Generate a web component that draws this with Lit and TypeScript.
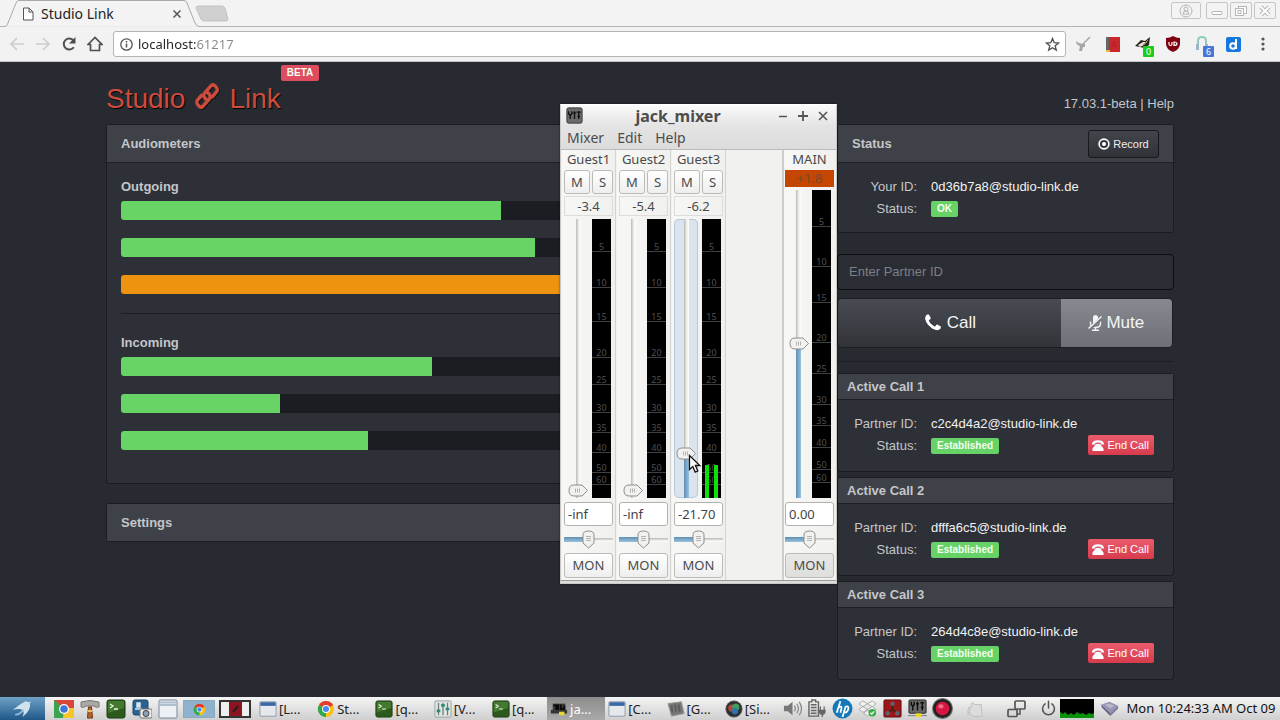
import { LitElement, html, svg, css, nothing } from "lit";
import { customElement, property } from "lit/decorators.js";

const PHONE_PATH =
  "M1600 1240q0 27-10 70.5t-21 68.5q-21 50-122 106-94 51-186 51-27 0-53-3.5t-57.5-12.5-47-14.5-55.5-20.5-49-18q-98-35-175-83-127-79-264-216t-216-264q-48-77-83-175-3-9-18-49t-20.5-55.5-14.5-47-12.5-57.5-3.5-53q0-92 51-186 56-101 106-122 25-11 68.5-21t70.5-10q14 0 21 3 18 6 53 76 11 19 30 54t35 63.5 31 53.5q3 4 17.5 25t21.5 35.5 7 28.5q0 20-28.5 50t-62 55-62 53-28.5 46q0 9 5 22.5t8.5 20.5 14 24 11.5 19q76 137 174 235t235 174q2 1 19 11.5t24 14 20.5 8.5 22.5 5q18 0 46-28.5t53-62 55-62 50-28.5q14 0 28.5 7t35.5 21.5 25 17.5q25 15 53.5 31t63.5 35 54 30q70 35 76 53 3 7 3 21z";

const chromeLogo = svg`
  <circle cx="10" cy="10" r="9" fill="#fbc116"/>
  <path d="M10 10 2.2 5.5A9 9 0 0 1 17.8 5.5z" fill="#e33b2e"/>
  <path d="M10 10 2.2 5.5A9 9 0 0 0 10 19z" fill="#2da94f"/>
  <path d="M10 5.5h7.8L10 10z" fill="#e33b2e"/>
  <circle cx="10" cy="10" r="4.4" fill="#fff"/><circle cx="10" cy="10" r="3.4" fill="#4a8af4"/>`;
const terminalLogo = svg`
  <rect x="1" y="1" width="18" height="18" rx="2" fill="#2c5a1c" stroke="#1d3a12"/>
  <path d="M2 2h16v7L2 14z" fill="#447a30"/>
  <path d="m4 5 3 2-3 2M8 10h4" stroke="#e8f3e2" stroke-width="1.3" fill="none"/>`;
const windowLogo = svg`
  <rect x="1" y="2" width="18" height="16" rx="1" fill="#e6e9ec" stroke="#8795a5"/>
  <rect x="1.5" y="2.5" width="17" height="4" fill="#3a68a6"/>`;
const mixerLogo = svg`
  <rect x="1" y="1" width="18" height="18" rx="2" fill="#6b6b6b" stroke="#333"/>
  <path d="M3 5v3l2 2 2-2V5M5 10v4M10 5v9M8.500 7h3M15 5v9M13.500 11h3M12.500 6h5" stroke="#111" stroke-width="1.600" fill="none"/>`;

const ICONS: Record<string, unknown> = {
  chrome: chromeLogo,
  chromebox: svg`<rect x="0" y="1" width="20" height="18" fill="#d9463a"/><path d="M0 1v18h10V9z" fill="#3ea351"/><path d="M10 9h10v10H9z" fill="#f5c828"/><circle cx="10" cy="10" r="5" fill="#fff"/><circle cx="10" cy="10" r="3.800" fill="#3f76d6"/>`,
  terminal: terminalLogo,
  window: windowLogo,
  mixer: mixerLogo,
  bird: svg`<path d="M1 11c3-2 6-5 12-8l3 1 2-1-1 2c1 5-2 9-7 13 2-4 1-6-1-7-3-1-5 0-8 0z" fill="#cfe2ee"/><path d="M3 16c3 0 6-2 8-5" stroke="#9cc3dc" stroke-width="1.5" fill="none"/>`,
  hammer: svg`<path d="M1 3q9-3 18 0v5q-3 1-5-1H6Q4 9 1 8z" fill="#a9a9a6" stroke="#777"/><path d="M8.500 8h3l1 11h-5z" fill="#b5652a" stroke="#70330e"/><path d="M8 12h4" stroke="#e6c25a" stroke-width="2"/>`,
  shot: svg`<rect x="1" y="1" width="15" height="15" rx="2" fill="#2c6291" stroke="#1c4468"/><path d="M5 4h3v4H5zM3 10h7" stroke="#d5e6f2" stroke-width="1.500" fill="#d5e6f2"/><rect x="8" y="10" width="12" height="9" rx="1" fill="#e8e8e8" stroke="#777"/><circle cx="14" cy="14.500" r="3" fill="#89a0b8" stroke="#444"/>`,
  files: svg`<rect x="1" y="1" width="18" height="18" rx="1" fill="#edf1f5" stroke="#77889b"/><path d="M1.500 3.500h17M1.500 6h17" stroke="#aebfce" stroke-width="2"/>`,
  volume: svg`<path d="M1 7h4l5-4v14l-5-4H1z" fill="#777"/><path d="M12 7q2 3 0 6M14.500 5q3.500 5 0 10M17 3q5 7 0 14" stroke="#888" stroke-width="1.300" fill="none"/>`,
  battery: svg`<path d="M4 1h4v2h3v15H1V3h3z" fill="none" stroke="#666" stroke-width="1.500"/><path d="M3 6h6M3 9h6M3 12h6M3 15h6" stroke="#666" stroke-width="1.600"/><path d="M13 8v4M17 8v4M12 12h6q0 4-3 4t-3-4zM15 15v4" fill="#666" stroke="#666" stroke-width="1.300"/>`,
  hp: svg`<circle cx="10" cy="10" r="9.500" fill="#1479b8"/><path d="M8 3 4.500 14M6.500 9q3-2 2.500 1l-1 4M13 8l-3 10M12.500 8.500q4-1.500 3 2-1 4-4 3" stroke="#fff" stroke-width="1.700" fill="none"/>`,
  dropbox: svg`<path d="m5 2 5 3-5 3-4-3zM15 2l4 3-4 3-5-3zM5 8l5 3-5 3-4-3zM15 8l4 3-4 3-5-3zM6 15l4-3 4 3-4 3z" fill="#f3f3f3" stroke="#999" stroke-width=".8"/><circle cx="15" cy="14.500" r="4" fill="#37ad45"/><path d="m13 14.500 1.500 1.500 2.500-3" stroke="#fff" stroke-width="1.300" fill="none"/>`,
  redtray: svg`<rect x="1" y="1" width="18" height="18" rx="1" fill="#9c1519" stroke="#6d0c10"/><path d="M10 11V6M10 11l-5 4M10 11l5 4" stroke="#321" stroke-width="1.500"/><circle cx="10" cy="5" r="2.300" fill="#5a6472"/><circle cx="5" cy="15" r="2.300" fill="#5a6472"/><circle cx="15" cy="15" r="2.300" fill="#5a6472"/>`,
  mixtray: svg`<rect x="1" y="1" width="18" height="14" rx="1" fill="#6b6b6b" stroke="#222"/><path d="M3.500 3v3l1.500 1.500L6.500 6V3M5 7v5M10 3v9M8.500 5h3M15 3v9M13.500 9h3M13 4h4" stroke="#0c0c0c" stroke-width="1.500" fill="none"/><path d="M0 17.500h20" stroke="#777"/><path d="M8 15h6v4H8z" fill="#e9da28"/>`,
  record: svg`<circle cx="10" cy="10" r="9.500" fill="#222" stroke="#777"/><circle cx="10" cy="10" r="6.500" fill="#d5163e"/><ellipse cx="8.500" cy="8" rx="2.500" ry="2" fill="#ef6d88"/>`,
  hand: svg`<path d="M6 8V4l2-1 1 2h8l1 13H7l-1-2H2v-2h3l-3-1v-2h3l-2-1V8z" fill="#dcdcdc" stroke="#bdbdbd"/>`,
  network: svg`<rect x="8" y="2" width="10" height="8" rx="1" fill="none" stroke="#555" stroke-width="1.700"/><rect x="1" y="10.500" width="9" height="7" rx="1" fill="#d8d8d8" stroke="#555" stroke-width="1.700"/><path d="M13 10v5h-3" fill="none" stroke="#555" stroke-width="1.500"/>`,
  power: svg`<path d="M6 4.500a7 7 0 1 0 8 0M10 1.500v8" stroke="#555" stroke-width="1.800" fill="none" stroke-linecap="round"/>`,
  cube: svg`<path d="m1 6 9-3 9 4-8 8z" fill="#9795b3"/><path d="m1 6 10 9v3L2 9z" fill="#5e5b7e"/><path d="m19 7-8 8v3l8-8z" fill="#76739a"/><path d="m5 6 5-1 5 2-4 3z" fill="#b9b7ce"/>`,
  sliders: svg`<rect x="1" y="1" width="18" height="18" rx="1" fill="#dfe5e3" stroke="#90a09c"/><path d="M5 3v14M10 3v14M15 3v14" stroke="#6b7b80" stroke-width="1.400"/><path d="M3 12h4M8 6h4M13 10h4" stroke="#2e8a6d" stroke-width="3"/>`,
  keys: svg`<path d="m1 4 15-2 3 13-14 3z" fill="#777" stroke="#999"/><path d="m5 6 1 8M9 5l1 8M13 5l1 8" stroke="#5a5a5a" stroke-width="2"/>`,
  scope: svg`<circle cx="10" cy="10" r="9" fill="#2b2f30" stroke="#555"/><circle cx="7.500" cy="9" r="4" fill="#b8433a"/><circle cx="12" cy="8" r="4" fill="#3d9d5e"/><circle cx="11" cy="12.500" r="3.500" fill="#2e74a8"/>`,
  jack: svg`<path d="M1 11h18v4H1z" fill="#333"/><path d="M3 4h14v8H3z" fill="#3a3a3a"/><path d="M4 6h3v5M9 5v6M12 5v5h4V6" stroke="#0a0a0a" stroke-width="2" fill="none"/><path d="M10 13h6v4h-6z" fill="#e8d52c"/>`,
};

const icon = (name: string, size = 20, h = size) =>
  html`<svg width=${size} height=${h} viewBox="0 0 20 20" aria-hidden="true">${ICONS[name]}</svg>`;

/* One level meter: tick positions are percentages of the full scale. */
const TICKS: [string, number][] = [
  ["5", 12], ["10", 25], ["15", 37], ["20", 50], ["25", 60],
  ["30", 70], ["35", 77], ["40", 84], ["50", 91], ["60", 95],
];

@customElement("mixer-strip")
export class MixerStrip extends LitElement {
  @property() name = "";
  @property() level = "";
  @property() gain = "";
  @property({ type: Number }) fader = 0;
  @property({ type: Number }) signal = 0;
  @property({ type: Boolean, reflect: true }) active = false;
  @property({ type: Boolean, reflect: true }) main = false;

  static styles = css`
    :host {
      display: flex; flex-direction: column; gap: 2px; box-sizing: border-box;
      width: 54px; padding: 1px 2px 2px; border-right: 1px solid #d4d3d0;
      background: linear-gradient(90deg, #f7f7f5, #f0f0ee);
      font: 13px/17px "Noto Sans", sans-serif; color: #4a4a4a;
    }
    :host([main]) { border-right: 0; border-left: 2px solid #cfcecb; padding-left: 1px; }
    .name { text-align: center; height: 17px; font-size: 13px; }
    .switches { display: flex; gap: 2px; height: 24px; }
    button {
      box-sizing: border-box; padding: 0; flex: 1; font: inherit; color: inherit;
      border: 1px solid #bdbbb7; border-radius: 3px; background: linear-gradient(#fff, #eee);
    }
    .mute { flex: 0 0 26px; }
    .level { height: 20px; line-height: 18px; text-align: center; box-sizing: border-box; border: 1px solid #dddcd9; }
    :host([main]) .level { height: 17px; line-height: 17px; background: #c54503; color: #7a4a30; border: 0; }
    .fader { flex: 1; min-height: 0; display: flex; justify-content: space-between; padding: 1px 2px 2px 0; }
    :host([main]) .fader { padding-right: 3px; }
    .slot { flex: 1; display: flex; justify-content: center; }
    :host([active]) .slot { background: #dbe4ee; border-radius: 5px; box-shadow: inset 0 0 0 1px #b5c9db; margin-right: 4px; }
    .meter { width: 19px; background: #000; display: flex; flex-direction: column; position: relative; }
    .tick {
      min-height: 0; display: flex; flex-direction: column; justify-content: flex-end; align-items: center;
      box-sizing: border-box; border-bottom: 1px solid #414141; font: 9px/8px "Noto Sans", sans-serif; color: #505050;
    }
    .rest { flex-basis: 0; }
    .bars { position: absolute; inset: auto 3px 0 3px; display: flex; justify-content: space-between; }
    .bar { width: 4px; background: #0be00b; }
    input { box-sizing: border-box; margin: 0; }
    .gain {
      width: 100%; height: 24px; padding: 0 3px; border: 1px solid #b4b2ae; border-radius: 3px;
      background: #fff; font: inherit; color: #444;
    }
    input[type="range"] { appearance: none; -webkit-appearance: none; background: none; padding: 0; outline: 0; }
    .vertical { writing-mode: vertical-lr; direction: rtl; width: 20px; height: 100%; }
    .vertical::-webkit-slider-runnable-track {
      width: 20px; height: 100%;
      background:
        linear-gradient(90deg, #5d8fb4, #9cc1dc) center bottom / 5px var(--fill) no-repeat,
        linear-gradient(90deg, #c4c3c0 1px, #e8e8e5 2px, #fff) center / 5px 100% no-repeat;
    }
    .vertical::-webkit-slider-thumb {
      -webkit-appearance: none; width: 20px; height: 14px; border: 0;
      background: url("data:image/svg+xml,%3Csvg xmlns='http://www.w3.org/2000/svg' width='20' height='13'%3E%3Cpath d='M6 1h8l5.500 5.500L14 12H6Q1 12 1 6.500T6 1z' fill='%23f1f1ef' stroke='%23908e8a'/%3E%3Cpath d='M7.500 4.500v4M9.500 4.500v4M11.500 4.500v4' stroke='%23b5b3b0'/%3E%3C/svg%3E") center top no-repeat;
    }
    .pan { width: 100%; height: 23px; }
    .pan::-webkit-slider-runnable-track {
      height: 19px;
      background:
        linear-gradient(#5d8fb4, #9cc1dc) left center / 50% 5px no-repeat,
        linear-gradient(#c4c3c0 1px, #e8e8e5 2px, #fff) center / 100% 4px no-repeat;
    }
    .pan::-webkit-slider-thumb {
      -webkit-appearance: none; width: 13px; height: 19px; border: 0;
      background: url("data:image/svg+xml,%3Csvg xmlns='http://www.w3.org/2000/svg' width='13' height='19'%3E%3Cpath d='M1 5Q1 1 6.500 1T12 5v8l-5.500 5L1 13z' fill='%23f1f1ef' stroke='%23908e8a'/%3E%3Cpath d='M4 6.500h5M4 8.500h5M4 10.500h5' stroke='%23b5b3b0'/%3E%3C/svg%3E") center no-repeat;
    }
    .mon { flex: 0 0 25px; }
    :host([main]) .mon { background: linear-gradient(#e8e8e6, #dededc); }
  `;

  render() {
    let prev = 0;
    return html`
      <div class="name">${this.name}</div>
      ${this.main ? nothing : html`<div class="switches">
        <button class="mute" aria-label="Mute ${this.name}">M</button><button aria-label="Solo ${this.name}">S</button>
      </div>`}
      <div class="level">${this.level}</div>
      <div class="fader">
        <div class="slot">
          <input class="vertical" type="range" min="0" max="100" .value=${String(this.fader)}
            style="--fill:${this.fader}%" aria-label="${this.name} fader" />
        </div>
        <div class="meter">
          ${TICKS.map(([label, at]) => {
            const grow = at - prev;
            prev = at;
            return html`<div class="tick" style="flex:${grow} 1 0">${label}</div>`;
          })}
          <div class="rest" style="flex-grow:${100 - prev}"></div>
          ${this.signal ? html`<div class="bars" style="height:${this.signal}%"><span class="bar"></span><span class="bar"></span></div>` : nothing}
        </div>
      </div>
      <input class="gain" type="text" .value=${this.gain} aria-label="${this.name} gain" />
      <input class="pan" type="range" min="0" max="100" value="50" aria-label="${this.name} balance" />
      <button class="mon" aria-label="Monitor ${this.name}">MON</button>`;
  }
}

@customElement("mixer-window")
export class MixerWindow extends LitElement {
  static styles = css`
    :host {
      display: flex; flex-direction: column; box-sizing: border-box; border: 1px solid #c9c8c5; border-top-color: #fff;
      background: #f1f1ee; font: 14px/20px "Noto Sans", sans-serif; color: #4c4c4c; box-shadow: 0 0 2px #0008;
    }
    .title { display: flex; align-items: center; height: 21px; padding: 0 5px; background: linear-gradient(#fafafa, #e4e4e4); }
    .title b { flex: 1; text-align: center; font-size: 16px; padding-left: 2px; }
    .title button, .menu button { border: 0; padding: 0; background: none; color: inherit; font: inherit; }
    .title button { width: 16px; height: 16px; margin-left: 4px; display: grid; place-items: center; }
    .menu { display: flex; gap: 13px; height: 24px; padding: 0 6px; background: linear-gradient(#e4e4e4, #dcdcdc); border-bottom: 1px solid #bbb; box-sizing: border-box; }
    .strips { flex: 1; min-height: 0; display: flex; gap: 1px; padding-left: 1px; }
    .space { flex: 1; }
    .foot { height: 3px; border-top: 1px solid #999; background: #ddd; box-sizing: border-box; }
    .pointer { position: absolute; left: 127px; top: 349px; }
  `;
  render() {
    return html`
      <div class="title">
        ${icon("mixer", 17)}<b>jack_mixer</b>
        <button aria-label="Minimize"><svg width="12" height="12"><path d="M2 6.500h8" stroke="#555" stroke-width="1.500" /></svg></button>
        <button aria-label="Maximize"><svg width="12" height="12"><path d="M1 6h10M6 1v10" stroke="#555" stroke-width="1.800" /></svg></button>
        <button aria-label="Close"><svg width="12" height="12"><path d="m2 2 8 8M10 2l-8 8" stroke="#555" stroke-width="1.600" /></svg></button>
      </div>
      <div class="menu"><button>Mixer</button><button>Edit</button><button>Help</button></div>
      <div class="strips">
        <mixer-strip name="Guest1" level="-3.4" gain="-inf"></mixer-strip>
        <mixer-strip name="Guest2" level="-5.4" gain="-inf"></mixer-strip>
        <mixer-strip name="Guest3" level="-6.2" gain="-21.70" fader="14" signal="12" active></mixer-strip>
        <div class="space"></div>
        <mixer-strip name="MAIN" level="+1.8" gain="0.00" fader="50" main></mixer-strip>
      </div>
      <div class="foot"></div>
      <svg class="pointer" width="14" height="20" viewBox="0 0 14 20" aria-hidden="true">
        <path d="M1.500 1.500v14l3.300-3 2.400 5.600 2.600-1.100-2.400-5.500h4.400z" fill="#fff" stroke="#111" stroke-width="1.300" />
      </svg>`;
  }
}

const CALLS = ["c2c4d4a2", "dfffa6c5", "264d4c8e"];
const TASKS: [string, string, boolean?][] = [
  ["window", "[L..."], ["chrome", "St..."], ["terminal", "[q..."], ["sliders", "[V..."], ["terminal", "[q..."],
  ["jack", "ja...", true], ["window", "[C..."], ["keys", "[G..."], ["scope", "[Si..."],
];

@customElement("app-root")
export class AppRoot extends LitElement {
  static styles = css`
    :host {
      display: flex; flex-direction: column; height: 100vh; min-height: 720px; position: relative; overflow: hidden;
      background: #272a30; color: #c4c6c9; font: 13px/22px "Liberation Sans", Arial, sans-serif;
    }
    button { font: inherit; color: inherit; border: 0; padding: 0; background: none; box-sizing: border-box; }
    svg { display: block; flex: none; }

    .tabs { display: flex; height: 27px; background: #f3f3f3; border-bottom: 1px solid #b3b3b3; box-sizing: border-box; font: 14px/27px "Noto Sans", sans-serif; color: #222; }
    .tab { position: relative; box-sizing: border-box; width: 194px; height: 27px; margin-left: 5px; padding: 0 17px; display: flex; align-items: center; gap: 7px; }
    .tab .shape { position: absolute; inset: 0; }
    .tab > :not(.shape) { position: relative; }
    .tab .label { flex: 1; }
    .newtab { align-self: center; margin-left: -4px; }
    .controls { margin-left: auto; display: flex; gap: 2px; padding: 2px 4px; }
    .controls button { width: 22px; height: 17px; border: 1px solid #c6c6c6; border-radius: 2px; display: grid; place-items: center; }
    .controls .user { width: 30px; margin-right: 3px; }

    .toolbar { display: flex; align-items: center; height: 35px; padding: 0 2px 0 4px; background: #f2f2f2; border-bottom: 1px solid #c4c4c4; box-sizing: border-box; }
    .toolbar > button { width: 26px; height: 26px; display: grid; place-items: center; }
    .omni { flex: 1; display: flex; align-items: center; gap: 5px; height: 26px; margin: 0 2px 0 5px; padding: 0 5px 0 6px; background: #fff; border: 1px solid #b4b4b4; border-radius: 3px; box-sizing: border-box; }
    .omni input {
      flex: 1; min-width: 0; border: 0; padding: 0; outline: 0; font: 13px/20px "Noto Sans", sans-serif;
      background: linear-gradient(90deg, #222 58px, #888 58px) text; color: transparent;
    }
    .toolbar > .ext { width: 30px; position: relative; }
    .count { position: absolute; right: 4px; bottom: 0; width: 11px; height: 11px; border-radius: 1px; color: #fff; font: 9px/11px "Noto Sans", sans-serif; }
    .green { background: #19cd19; } .blue { background: #4676d8; }

    .page { flex: 1; min-height: 0; }
    .container { max-width: 1068px; margin: 0 auto; }
    .top { display: flex; align-items: flex-start; height: 62px; }
    h1 { margin: 19px 0 0; display: flex; align-items: center; gap: 9px; font: 28px/36px "Liberation Sans", Arial, sans-serif; color: #cd4c3d; text-shadow: 1px 1px 1px #000; }
    h1 svg { margin-top: -6px; }
    .badge { display: inline-block; padding: 0 6px; border-radius: 2px; background: #67d265; color: #f2fff2; font: bold 10px/16px "Liberation Sans", Arial, sans-serif; }
    .beta { margin-top: 3px; background: #e04c5f; }
    .version { margin-left: auto; margin-top: 31px; }
    a { color: inherit; text-decoration: none; }
    .columns { display: grid; grid-template-columns: 1fr 337px; gap: 30px; align-items: start; }
    .card { background: #2e3037; border: 1px solid #1a1c20; border-radius: 3px; }
    .card h2 { margin: 0; height: 37px; padding: 0 14px; display: flex; align-items: center; justify-content: space-between; background: #3e4148; border-bottom: 1px solid #1e2025; font-size: 13px; line-height: 22px; }
    .closed h2 { border-bottom: 0; }
    .meters { padding: 15px 14px; }
    h3 { margin: 0 0 5px; font-size: 13px; line-height: 18px; }
    .track { height: 19px; margin-bottom: 18px; background: #1c1d22; border-radius: 3px; overflow: hidden; }
    .value { height: 100%; background: #69d466; }
    .warn { background: #ee930f; }
    hr { border: 0; border-top: 1px solid #1d1f24; margin: 19px 0 20px; }
    .closed { margin-top: 19px; }

    .record { display: flex; align-items: center; justify-content: center; gap: 3px; width: 71px; height: 28px; border: 1px solid #17191c; border-radius: 3px; background: linear-gradient(#42454c, #303238); font: 11px/20px "Liberation Sans", Arial, sans-serif; color: #eee; }
    dl { margin: 0; padding: 13px 0 12px; display: grid; grid-template-columns: 79px 1fr auto; column-gap: 14px; }
    dt { text-align: right; grid-column: 1; } dd { margin: 0; color: #f2f2f2; display: flex; align-items: center; height: 22px; }
    .id { grid-column: 2 / -1; white-space: nowrap; }
    .partner { display: block; width: 100%; height: 36px; margin: 21px 0 8px; padding: 0 11px 1px; box-sizing: border-box; background: #2b2d34; border: 1px solid #0c0d0f; border-radius: 4px; font: inherit; color: #eee; }
    .partner::placeholder { color: #7c7f84; }
    .actions { display: flex; height: 50px; margin-right: 1px; border-radius: 5px; overflow: hidden; border: 1px solid #1c1e22; box-sizing: border-box; font: 17px/24px "Liberation Sans", Arial, sans-serif; color: #f4f4f4; text-shadow: 1px 1px 1px #0006; }
    .actions button { display: flex; align-items: center; justify-content: center; gap: 4px; }
    .call { flex: 2; background: linear-gradient(#484b51, #313339); }
    .mutecall { flex: 1; background: linear-gradient(#868a90, #6d7177); }
    .right hr { margin: 13px 0 11px; }
    .active { margin-bottom: 5px; }
    .active h2 { height: 25px; padding: 0 9px; }
    .active dl { padding-bottom: 14px; }
    .end { display: flex; align-items: center; gap: 3px; height: 20px; padding: 0 5px 0 4px; margin-right: 19px; border-radius: 2px; background: linear-gradient(#ea5c6c, #d73b4c); font: 11px/20px "Liberation Sans", Arial, sans-serif; color: #fff; }

    mixer-window { position: absolute; left: 560px; top: 104px; width: 277px; height: 480px; }

    .taskbar { display: flex; height: 23px; background: linear-gradient(#f4f4f4, #cfcfcf); font: 13px/22px "Noto Sans", sans-serif; color: #222; }
    .taskbar button { display: flex; align-items: center; justify-content: center; }
    .start { width: 45px; background: linear-gradient(#6fa1c6, #1f5888); }
    .launch { width: 26px; }
    .launchers { display: flex; padding-left: 6px; }
    .pager { display: flex; gap: 4px; padding: 3px 5px 3px 2px; }
    .pager button { width: 32px; height: 18px; border: 1px solid #8ab; background: #8db2cd; }
    .pager .other { background: #eee; border: 2px solid #333; }
    .tasks { flex: 1; display: flex; min-width: 0; }
    .tasks button { flex: 1; min-width: 0; gap: 2px; justify-content: flex-start; padding-left: 3px; overflow: hidden; white-space: nowrap; }
    .tasks .current { background: linear-gradient(#8c8c8c, #a9a9a9); color: #fff; }
    .tray { display: flex; }
    .tray button { width: 25px; }
    .tray .w40 { width: 40px; } .tray .w44 { width: 44px; } .tray .w18 { width: 18px; }
    .clock { width: 158px; text-align: center; color: #111; }
  `;

  private meters(values: number[]) {
    return values.map(
      (v) => html`<div class="track" role="meter" aria-valuenow=${v}><div class="value ${v > 75 ? "warn" : ""}" style="width:${v}%"></div></div>`
    );
  }

  render() {
    return html`
      <header class="tabs">
        <div class="tab">
          <svg class="shape" width="194" height="27" viewBox="0 0 194 27" aria-hidden="true">
            <path d="M0 26.500Q2 26 3 23L11 3Q12 .5 14 .5H179Q181 .5 182 3L190 23Q191 26 194 26.500V27H0z" fill="#f3f3f3" stroke="#aaa" /><path d="M1 27h192" stroke="#f3f3f3" stroke-width="1.500" />
          </svg>
          <svg width="12" height="14" viewBox="0 0 12 14"><path d="M1.500 1h5.500l4 4v8h-9.500zM7 1v4h4" fill="#fff" stroke="#555" /></svg>
          <span class="label">Studio Link</span>
          <button aria-label="Close tab"><svg width="10" height="10"><path d="m1.500 1.500 7 7M8.500 1.500l-7 7" stroke="#555" stroke-width="1.500" /></svg></button>
        </div>
        <button class="newtab" aria-label="New tab"><svg width="34" height="17"><path d="M3 1h24q2 0 3 2l3 11q0 2-2 2H9q-2 0-3-2L1 3q0-2 2-2z" fill="#d0d0d0" stroke="#c3c3c3" /></svg></button>
        <div class="controls">
          <button class="user" aria-label="Profile"><svg width="14" height="14" fill="none" stroke="#b5b5b5"><circle cx="7" cy="7" r="6" /><circle cx="7" cy="5" r="2" /><path d="M4 10q0-3 3-3t3 3z" /></svg></button>
          <button aria-label="Minimize"><svg width="12" height="12"><rect x="1" y="6.500" width="10" height="3" rx="1" fill="#fff" stroke="#b5b5b5" /></svg></button>
          <button aria-label="Restore"><svg width="12" height="12" fill="#fff" stroke="#b5b5b5"><rect x="3.500" y="1.500" width="8" height="7" /><rect x=".5" y="3.500" width="8" height="7" /><rect x="3" y="5.500" width="3" height="3" /></svg></button>
          <button aria-label="Close"><svg width="12" height="12"><path d="m2 2 8 8M10 2l-8 8" stroke="#b5b5b5" stroke-width="4" /><path d="m2 2 8 8M10 2l-8 8" stroke="#fff" stroke-width="2" /></svg></button>
        </div>
      </header>
      <nav class="toolbar">
        <button aria-label="Back"><svg width="16" height="14" fill="none" stroke="#cdcdcd" stroke-width="1.700"><path d="M15 7H2M8 1 2 7l6 6" /></svg></button>
        <button aria-label="Forward"><svg width="16" height="14" fill="none" stroke="#cdcdcd" stroke-width="1.700"><path d="M1 7h13M8 1l6 6-6 6" /></svg></button>
        <button aria-label="Reload"><svg width="16" height="16"><path d="M12.800 11.200A5.500 5.500 0 1 1 12.500 4.500" fill="none" stroke="#4f4f4f" stroke-width="2" /><path d="M14.500 1v6.500H8z" fill="#4f4f4f" /></svg></button>
        <button aria-label="Home"><svg width="16" height="16"><path d="M1 8.500 8 1.500l7 7h-2.500v6h-9v-6z" fill="none" stroke="#4f4f4f" stroke-width="1.700" /></svg></button>
        <div class="omni">
          <svg width="13" height="13"><circle cx="6.500" cy="6.500" r="5.700" fill="none" stroke="#555" stroke-width="1.300" /><path d="M6.500 5.500v4M6.500 3v1.500" stroke="#555" stroke-width="1.500" /></svg>
          <input type="text" aria-label="Address" value="localhost:61217" />
          <svg width="15" height="15" viewBox="0 0 15 15"><path d="m7.500 1.500 1.700 4.200 4.400.3-3.400 2.800 1.100 4.300-3.800-2.400-3.800 2.400 1.100-4.300L1.400 6l4.400-.3z" fill="none" stroke="#4f4f4f" stroke-width="1.300" /></svg>
        </div>
        <button class="ext" aria-label="Cleaner"><svg width="16" height="16"><path d="m15 1-7 7" stroke="#aaa" stroke-width="1.600" /><path d="M1 5q3 3 9 3v3H8l-1 4H4l1-5Q1 9 1 5z" fill="#a6a6a6" /></svg></button>
        <button class="ext" aria-label="Dictionary"><svg width="14" height="15"><path d="M0 0h14v15H0z" fill="#c9262e" /><path d="M0 0h3v13H0z" fill="#666" /><path d="M0 13h4v2H0z" fill="#e2b93b" /><path d="m5.500 11 2.500-7 2.500 7M6.500 9h3" fill="none" stroke="#b0232a" /></svg></button>
        <button class="ext" aria-label="Privacy"><svg width="16" height="14"><path d="M0 9 6 3l4 1 5-4-1 8-5 3-4-1z" fill="#2b2522" /><path d="m3 8 5-3 4 0-3 3-4 2z" fill="#e8dfd0" /><path d="m8 8 5-5" stroke="#b08b5a" /></svg><span class="count green">0</span></button>
        <button class="ext" aria-label="Blocker"><svg width="14" height="16"><path d="M7 0q3 2 7 2v6q0 5-7 8-7-3-7-8V2q4 0 7-2z" fill="#7e0310" /><path d="M3 6v2q0 1.500 1.500 1.500T6 8V6M8 6v3.500q3 0 3-1.700T8 6z" fill="none" stroke="#fff" stroke-width="1.200" /></svg></button>
        <button class="ext" aria-label="Headphones"><svg width="16" height="16"><path d="M3 12V5q0-4 4-4t4 4v7" fill="none" stroke="#8fcabf" stroke-width="2" /><path d="M1 8h3v6H1zM10 8h3v6h-3z" fill="#9db5c4" /></svg><span class="count blue">6</span></button>
        <button class="ext" aria-label="Deezer"><svg width="15" height="15"><rect width="15" height="15" rx="2" fill="#1379e0" /><circle cx="7" cy="9" r="2.800" fill="none" stroke="#fff" stroke-width="2" /><path d="M10 2v10" stroke="#fff" stroke-width="2" /></svg></button>
        <button class="ext" aria-label="Menu"><svg width="4" height="14" fill="#555"><circle cx="2" cy="2" r="1.600" /><circle cx="2" cy="7" r="1.600" /><circle cx="2" cy="12" r="1.600" /></svg></button>
      </nav>

      <main class="page">
        <div class="container">
          <div class="top">
            <h1>Studio
              <svg width="26" height="30" viewBox="0 0 24 24" preserveAspectRatio="none" fill="none" aria-hidden="true">
                <g id="chain" stroke-width="3" stroke-linecap="round" stroke-linejoin="round">
                  <path stroke="#14100f" transform="translate(.8 .8)" d="M11 14.500 10 13.500Q8 11.500 10 9.500L15.500 4Q17.500 2 19.500 4L20.500 5Q22.500 7 20.500 9L17 12.500M13 9.500 14 10.500Q16 12.500 14 14.500L8.500 20Q6.500 22 4.500 20L3.500 19Q1.500 17 3.500 15L7 11.500" />
                  <path stroke="#cd4c3d" d="M11 14.500 10 13.500Q8 11.500 10 9.500L15.500 4Q17.500 2 19.500 4L20.500 5Q22.500 7 20.500 9L17 12.500M13 9.500 14 10.500Q16 12.500 14 14.500L8.500 20Q6.500 22 4.500 20L3.500 19Q1.500 17 3.500 15L7 11.500" />
                </g>
              </svg>
              Link</h1>
            <span class="badge beta">BETA</span>
            <span class="version">17.03.1-beta | <a href="#help">Help</a></span>
          </div>
          <div class="columns">
            <div>
              <section class="card">
                <h2>Audiometers</h2>
                <div class="meters">
                  <h3>Outgoing</h3>
                  ${this.meters([56.6, 61.7, 80])}
                  <hr />
                  <h3>Incoming</h3>
                  ${this.meters([46.4, 23.7, 36.8])}
                </div>
              </section>
              <section class="card closed"><h2>Settings</h2></section>
            </div>
            <div class="right">
              <section class="card">
                <h2>Status
                  <button class="record"><svg width="12" height="12"><circle cx="6" cy="6" r="4.900" fill="none" stroke="#fff" stroke-width="1.600" /><circle cx="6" cy="6" r="2" fill="#fff" /></svg>Record</button>
                </h2>
                <dl>
                  <dt>Your ID:</dt><dd class="id">0d36b7a8@studio-link.de</dd>
                  <dt>Status:</dt><dd><span class="badge">OK</span></dd>
                </dl>
              </section>
              <input class="partner" type="text" placeholder="Enter Partner ID" aria-label="Partner ID" />
              <div class="actions">
                <button class="call"><svg width="20" height="20" viewBox="0 0 1792 1792" fill="#fff"><path d=${PHONE_PATH} /></svg>Call</button>
                <button class="mutecall"><svg width="14" height="16" viewBox="0 0 14 16"><rect x="5" y="0" width="5" height="10" rx="2.500" fill="#f4f4f4" /><path d="M2.500 6.500v2q0 4 5 4t5-4v-2M7.500 12.500V15M4 15.200h7" fill="none" stroke="#f4f4f4" stroke-width="1.400" /><path d="m1 14.500 12-11" stroke="#777b81" stroke-width="3.500" /><path d="m.5 13.500 13-12" stroke="#f4f4f4" stroke-width="1.500" /></svg>Mute</button>
              </div>
              <hr />
              ${CALLS.map((id, i) => html`
                <section class="card active">
                  <h2>Active Call ${i + 1}</h2>
                  <dl>
                    <dt>Partner ID:</dt><dd class="id">${id}@studio-link.de</dd>
                    <dt>Status:</dt><dd><span class="badge">Established</span></dd>
                    <button class="end"><svg width="12" height="11" viewBox="0 0 12 11" fill="#fff"><path d="M0 4.500Q0 .3 6 .3t6 4.200H8.800V3Q6 2.200 3.200 3v1.500zM4 4h4l3.500 4.500V11H.5V8.500z" /></svg>End Call</button>
                  </dl>
                </section>`)}
            </div>
          </div>
        </div>
      </main>

      <mixer-window></mixer-window>

      <footer class="taskbar">
        <button class="start" aria-label="Start">${icon("bird", 21)}</button>
        <div class="launchers">
          ${["chromebox", "hammer", "terminal", "shot", "files"].map((n) => html`<button class="launch" aria-label=${n}>${icon(n)}</button>`)}
        </div>
        <div class="pager">
          <button aria-label="Desktop 1">${icon("chrome", 13)}</button>
          <button class="other" aria-label="Desktop 2"><svg width="13" height="14"><rect width="13" height="14" fill="#8c1420" /><path d="m4 10 5-6" stroke="#222" stroke-width="2" /></svg></button>
        </div>
        <div class="tasks">
          ${TASKS.map(([n, label, on]) => html`<button class=${on ? "current" : ""}>${icon(n, 18)}${label}</button>`)}
        </div>
        <div class="tray">
          ${["volume", "battery", "hp", "dropbox", "redtray", "mixtray", "record"].map((n) => html`<button aria-label=${n}>${icon(n, n === "hp" || n === "record" ? 21 : 19)}</button>`)}
          <button class="w40" aria-label="hand">${icon("hand", 18)}</button>
          <button class="w44" aria-label="network">${icon("network")}</button>
          <button class="w18" aria-label="power">${icon("power", 17)}</button>
          <button class="w40" aria-label="Processor load"><svg width="34" height="19"><rect width="34" height="19" fill="#000" /><path d="M0 19v-6l3 2 2-2 3 3 3-2 3 2 3-3 3 2 3-1 3 2 3-2 3 1 2-1v5z" fill="#0b920b" /></svg></button>
          <button aria-label="cube">${icon("cube", 19)}</button>
        </div>
        <time class="clock">Mon 10:24:33 AM Oct 09</time>
      </footer>`;
  }
}
